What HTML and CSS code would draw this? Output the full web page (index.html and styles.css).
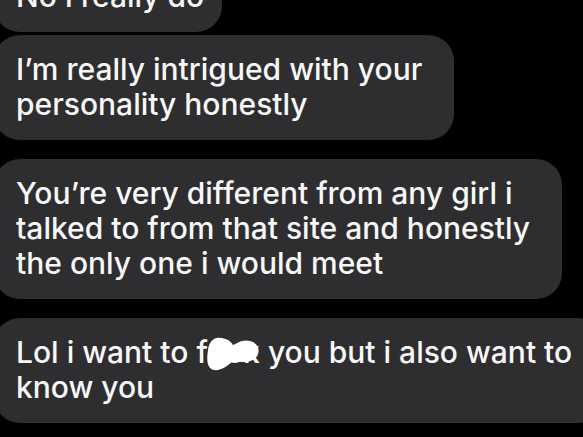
FILE: index.html
```html
<!DOCTYPE html>
<html lang="en">
<head>
    <meta charset="UTF-8">
    <meta name="viewport" content="width=device-width, initial-scale=1.0">
    <title>Messages</title>
    <link rel="stylesheet" href="styles.css">
</head>
<body>

    <div class="thread">
        <div class="bubble short">No I really do</div>
        <div class="bubble grouped">I’m really intrigued with your<br>personality honestly</div>
        <div class="bubble">You’re very different from any girl i<br>talked to from that site and honestly<br>the only one i would meet</div>
        <div class="bubble">Lol i want to <span class="censored">fuck<svg class="scribble" viewBox="0 0 56 36" width="56" height="36"><path d="M3 14 C4 6 9 1 15 2 C20 2 25 4 28 9 C32 7 38 3 45 5 C52 7 55 12 53 18 C51 24 45 26 38 26 C34 26 31 25 27 26 C22 30 16 35 9 34 C3 33 1 26 3 14 Z" fill="#fff"/></svg></span> you but i also want to<br>know you</div>
    </div>

</body>
</html>
```

FILE: styles.css
```css
body {
    margin: 0;
    background-color: #000;
    font-family: Inter, 'Noto Sans', sans-serif;
    overflow: hidden;
}
.thread {
    display: flex;
    flex-direction: column;
    align-items: flex-start;
    margin-top: -38px;
}
.bubble {
    background-color: #2e2e30;
    color: #f7f7f7;
    border-radius: 26px;
    padding: 17px 32px 18px 22px;
    margin: 19px 0 0 -6px;
    font-size: 30px;
    font-weight: 500;
    line-height: 35px;
    white-space: nowrap;
}
.bubble:first-child {
    margin-top: 0;
}
.bubble.short {
    padding-right: 18px;
}
.bubble.grouped {
    margin-top: 3px;
}
.censored {
    position: relative;
}
.scribble {
    position: absolute;
    left: 9px;
    top: 2px;
}
```
